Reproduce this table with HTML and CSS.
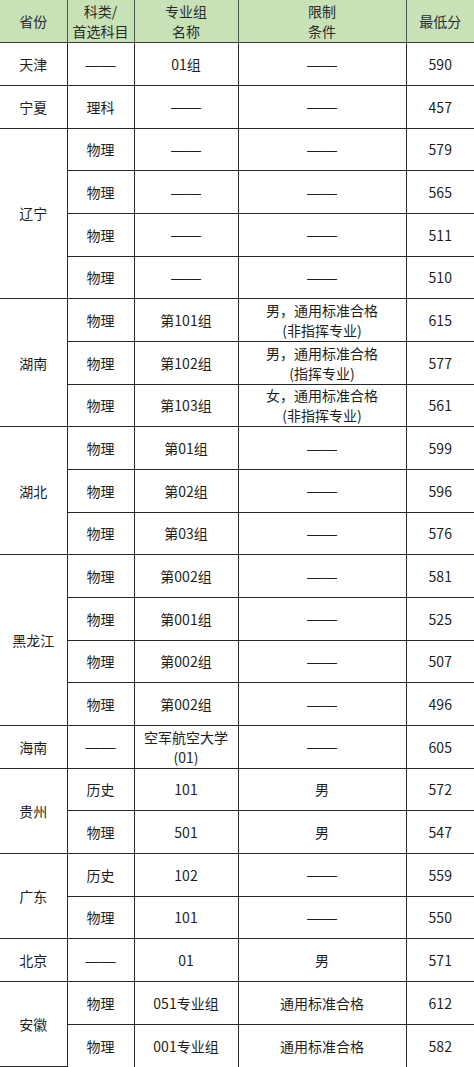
FILE: index.html
```html
<!DOCTYPE html>
<html lang="zh-CN">
<head>
<meta charset="utf-8">
<title>分数线</title>
<link rel="stylesheet" href="styles.css">
</head>
<body>
<table class="score-table">
  <colgroup>
    <col class="c-prov">
    <col class="c-subj">
    <col class="c-group">
    <col class="c-cond">
    <col class="c-score">
  </colgroup>
  <thead>
    <tr>
      <th>省份</th>
      <th>科类/<br>首选科目</th>
      <th>专业组<br>名称</th>
      <th>限制<br>条件</th>
      <th>最低分</th>
    </tr>
  </thead>
  <tbody>
    <tr><td>天津</td><td><span class="dash">——</span></td><td>01组</td><td><span class="dash">——</span></td><td>590</td></tr>
    <tr><td>宁夏</td><td>理科</td><td><span class="dash">——</span></td><td><span class="dash">——</span></td><td>457</td></tr>
    <tr><td rowspan="4">辽宁</td><td>物理</td><td><span class="dash">——</span></td><td><span class="dash">——</span></td><td>579</td></tr>
    <tr><td>物理</td><td><span class="dash">——</span></td><td><span class="dash">——</span></td><td>565</td></tr>
    <tr><td>物理</td><td><span class="dash">——</span></td><td><span class="dash">——</span></td><td>511</td></tr>
    <tr><td>物理</td><td><span class="dash">——</span></td><td><span class="dash">——</span></td><td>510</td></tr>
    <tr><td rowspan="3">湖南</td><td>物理</td><td>第101组</td><td>男，通用标准合格<br>(非指挥专业)</td><td>615</td></tr>
    <tr><td>物理</td><td>第102组</td><td>男，通用标准合格<br>(指挥专业)</td><td>577</td></tr>
    <tr><td>物理</td><td>第103组</td><td>女，通用标准合格<br>(非指挥专业)</td><td>561</td></tr>
    <tr><td rowspan="3">湖北</td><td>物理</td><td>第01组</td><td><span class="dash">——</span></td><td>599</td></tr>
    <tr><td>物理</td><td>第02组</td><td><span class="dash">——</span></td><td>596</td></tr>
    <tr><td>物理</td><td>第03组</td><td><span class="dash">——</span></td><td>576</td></tr>
    <tr><td rowspan="4">黑龙江</td><td>物理</td><td>第002组</td><td><span class="dash">——</span></td><td>581</td></tr>
    <tr><td>物理</td><td>第001组</td><td><span class="dash">——</span></td><td>525</td></tr>
    <tr><td>物理</td><td>第002组</td><td><span class="dash">——</span></td><td>507</td></tr>
    <tr><td>物理</td><td>第002组</td><td><span class="dash">——</span></td><td>496</td></tr>
    <tr><td>海南</td><td><span class="dash">——</span></td><td>空军航空大学<br>(01)</td><td><span class="dash">——</span></td><td>605</td></tr>
    <tr><td rowspan="2">贵州</td><td>历史</td><td>101</td><td>男</td><td>572</td></tr>
    <tr><td>物理</td><td>501</td><td>男</td><td>547</td></tr>
    <tr><td rowspan="2">广东</td><td>历史</td><td>102</td><td><span class="dash">——</span></td><td>559</td></tr>
    <tr><td>物理</td><td>101</td><td><span class="dash">——</span></td><td>550</td></tr>
    <tr><td>北京</td><td><span class="dash">——</span></td><td>01</td><td>男</td><td>571</td></tr>
    <tr><td rowspan="2">安徽</td><td>物理</td><td>051专业组</td><td>通用标准合格</td><td>612</td></tr>
    <tr><td>物理</td><td>001专业组</td><td>通用标准合格</td><td>582</td></tr>
  </tbody>
</table>
</body>
</html>
```

FILE: styles.css
```css
html, body {
  margin: 0;
  padding: 0;
  background: #ffffff;
}

body {
  font-family: "Noto Sans CJK SC", "Noto Sans", sans-serif;
  font-size: 14px;
  color: #1e1e1e;
  overflow: hidden;
}

.score-table {
  width: 474px;
  border-collapse: collapse;
  table-layout: fixed;
}

.c-prov { width: 67px; }
.c-subj { width: 67px; }
.c-group { width: 104px; }
.c-cond { width: 168px; }
.c-score { width: 68px; }

.score-table th,
.score-table td {
  border: 1px solid #262626;
  padding: 0;
  text-align: center;
  vertical-align: middle;
  line-height: 20px;
  font-weight: normal;
  white-space: nowrap;
}

.score-table thead th {
  background: #c8e1b7;
  color: #2b2b2b;
  border-top: none;
  border-color: #4f5a4a;
  border-bottom-color: #3a3a3a;
}

.score-table tr {
  height: 42.68px;
}

.score-table tr > :first-child {
  border-left: none;
}

.score-table tr > :last-child {
  border-right: none;
}

.score-table tbody tr:last-child td {
  border-bottom: none;
}

.score-table tbody td[rowspan] {
  border-left: none;
}

.dash {
  display: inline-block;
  font-family: "Liberation Sans", "Noto Sans CJK SC", sans-serif;
  font-size: 15px;
  color: #1e1e1e;
  letter-spacing: 0;
}
```
